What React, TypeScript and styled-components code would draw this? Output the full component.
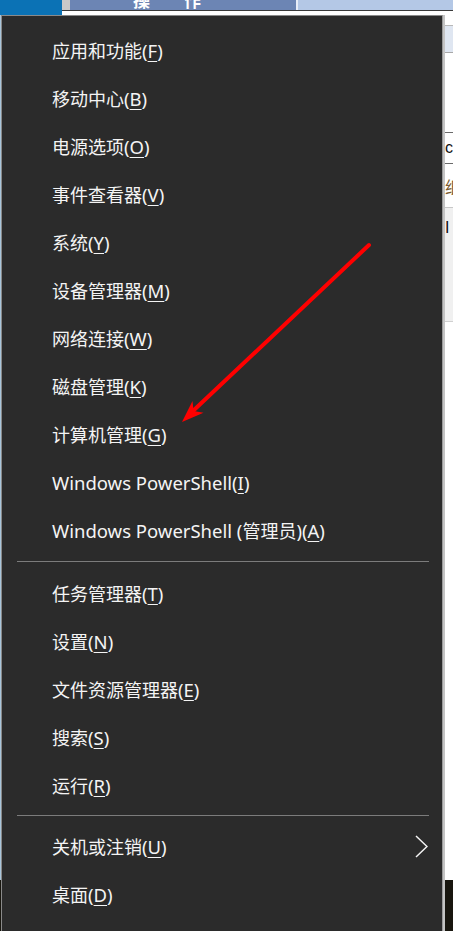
import { Fragment } from 'react'
import { styled, createGlobalStyle } from 'styled-components'

const GlobalStyle = createGlobalStyle`
  html, body {
    margin: 0;
    padding: 0;
    background: #2b2b2b;
  }
`

const Screen = styled.div`
  position: relative;
  width: 453px;
  height: 931px;
  overflow: hidden;
  display: grid;
  grid-template-columns: 62px 1fr;
  grid-template-rows: 1fr 51px;
  font-family: 'Noto Sans', 'Noto Sans CJK SC', sans-serif;
`

const LeftPane = styled.div`
  background: linear-gradient(#0b72b5 0 15px, #a9c6dc 15px);
`

const RightPane = styled.div`
  display: flex;
  flex-direction: column;
  background: #ffffff;
`

const HeaderBand = styled.div`
  display: grid;
  grid-template-columns: 8px 226px 2px 1fr;
  height: 10px;
  border-bottom: 1px solid #3a3a3a;
`

const HeaderCell = styled.div<{ $bg: string }>`
  background: ${(p) => p.$bg};
  overflow: hidden;
  display: flex;
  align-items: flex-end;
  gap: 34px;
  color: #ffffff;
  font-family: 'Noto Sans CJK SC', sans-serif;
  font-weight: 700;
  font-size: 17px;
  line-height: 1;
  padding: 0 0 2px 63px;
`

const SheetRow = styled.div<{ $h: number; $bg?: string; $line?: string }>`
  height: ${(p) => p.$h}px;
  background: ${(p) => p.$bg ?? '#ffffff'};
  border-bottom: 1px solid ${(p) => p.$line ?? 'transparent'};
  display: flex;
  align-items: center;
  justify-content: flex-end;
  font-size: 16px;
  color: #111;
  overflow: hidden;
  white-space: nowrap;
`

const SheetText = styled.span<{ $color?: string }>`
  width: 8px;
  overflow: hidden;
  color: ${(p) => p.$color ?? '#111'};
  font-family: 'Liberation Sans', 'Noto Sans CJK SC', sans-serif;
`

const SheetFill = styled.div`
  flex: 1;
  background: #ffffff;
`

const Taskbar = styled.div`
  grid-column: 1 / 3;
  background: #18160f;
`

const Menu = styled.nav`
  position: absolute;
  left: 1px;
  top: 15px;
  width: 440px;
  bottom: -10px;
  background: #2b2b2b;
  border-top: 1px solid #8a8a8a;
  border-left: 1px solid #8a8a8a;
  box-shadow: 1px 0 0 #9a9a9a, 3px 0 0 #c4c4c4;
  padding-top: 10px;
  display: flex;
  flex-direction: column;
`

const Item = styled.div`
  height: 48px;
  display: flex;
  align-items: center;
  justify-content: space-between;
  padding: 0 14px 0 50px;
  color: #f4f4f4;
  font-size: 18.5px;
  white-space: nowrap;
`

const Cjk = styled.span`
  font-family: 'Noto Sans CJK SC', sans-serif;
  font-size: 18px;
`

const Key = styled.span`
  text-decoration: underline;
  text-decoration-thickness: 1px;
  text-underline-offset: 3px;
`

const Separator = styled.hr<{ $space: number }>`
  border: none;
  height: 1px;
  background: #7c7c7c;
  margin: ${(p) => p.$space}px 13px ${(p) => p.$space}px 15px;
`

const Overlay = styled.svg`
  position: absolute;
  left: 0;
  top: 0;
  pointer-events: none;
`

type Entry = { label: string; key: string; submenu?: boolean }

const groups: Entry[][] = [
  [
    { label: '应用和功能', key: 'F' },
    { label: '移动中心', key: 'B' },
    { label: '电源选项', key: 'O' },
    { label: '事件查看器', key: 'V' },
    { label: '系统', key: 'Y' },
    { label: '设备管理器', key: 'M' },
    { label: '网络连接', key: 'W' },
    { label: '磁盘管理', key: 'K' },
    { label: '计算机管理', key: 'G' },
    { label: 'Windows PowerShell', key: 'I' },
    { label: 'Windows PowerShell (管理员)', key: 'A' },
  ],
  [
    { label: '任务管理器', key: 'T' },
    { label: '设置', key: 'N' },
    { label: '文件资源管理器', key: 'E' },
    { label: '搜索', key: 'S' },
    { label: '运行', key: 'R' },
  ],
  [
    { label: '关机或注销', key: 'U', submenu: true },
    { label: '桌面', key: 'D' },
  ],
]

const Label = ({ text }: { text: string }) => (
  <>
    {text.split(/([\u3400-\u9fff]+)/).map((part, i) =>
      /[\u3400-\u9fff]/.test(part) ? <Cjk key={i}>{part}</Cjk> : <Fragment key={i}>{part}</Fragment>,
    )}
  </>
)

const Chevron = () => (
  <svg width="13" height="23" viewBox="0 0 13 23">
    <polyline points="1,1 12,11.5 1,22" fill="none" stroke="#f4f4f4" strokeWidth="1.5" />
  </svg>
)

export default function App() {
  return (
    <>
      <GlobalStyle />
      <Screen>
        <LeftPane />
        <RightPane>
          <HeaderBand>
            <HeaderCell $bg="#c8c8c8" />
            <HeaderCell $bg="#6c85b4">
              <span>操</span>
              <span>作</span>
            </HeaderCell>
            <HeaderCell $bg="#e8eef8" />
            <HeaderCell $bg="#b4c8e6" />
          </HeaderBand>
          <SheetRow $h={14} $line="#b8b8b8" />
          <SheetRow $h={26} $bg="#dfe6f1" $line="#a8a8a8" />
          <SheetRow $h={79} $line="#6a6a6a" />
          <SheetRow $h={30} $line="#6a6a6a">
            <SheetText>c</SheetText>
          </SheetRow>
          <SheetRow $h={43} $line="#c8c8c8">
            <SheetText $color="#7a5a2a">纸</SheetText>
          </SheetRow>
          <SheetRow $h={40} $bg="#f0f0f0">
            <SheetText>I</SheetText>
          </SheetRow>
          <SheetRow $h={72} $bg="#f0f0f0" $line="#d0d0d0" />
          <SheetFill />
        </RightPane>
        <Taskbar />

        <Menu>
          {groups.map((group, gi) => (
            <Fragment key={gi}>
              {gi > 0 && <Separator $space={gi === 1 ? 7 : 6} />}
              {group.map((e) => (
                <Item key={e.key}>
                  <span>
                    <Label text={e.label} />(<Key>{e.key}</Key>)
                  </span>
                  {e.submenu && <Chevron />}
                </Item>
              ))}
            </Fragment>
          ))}
        </Menu>

        <Overlay width="453" height="931" viewBox="0 0 453 931">
          <line x1="369" y1="245" x2="194" y2="410" stroke="#ff0000" strokeWidth="4" strokeLinecap="round" />
          <polygon points="182,422 192.5,401 193.6,411 203.5,412.8" fill="#ff0000" />
        </Overlay>
      </Screen>
    </>
  )
}
